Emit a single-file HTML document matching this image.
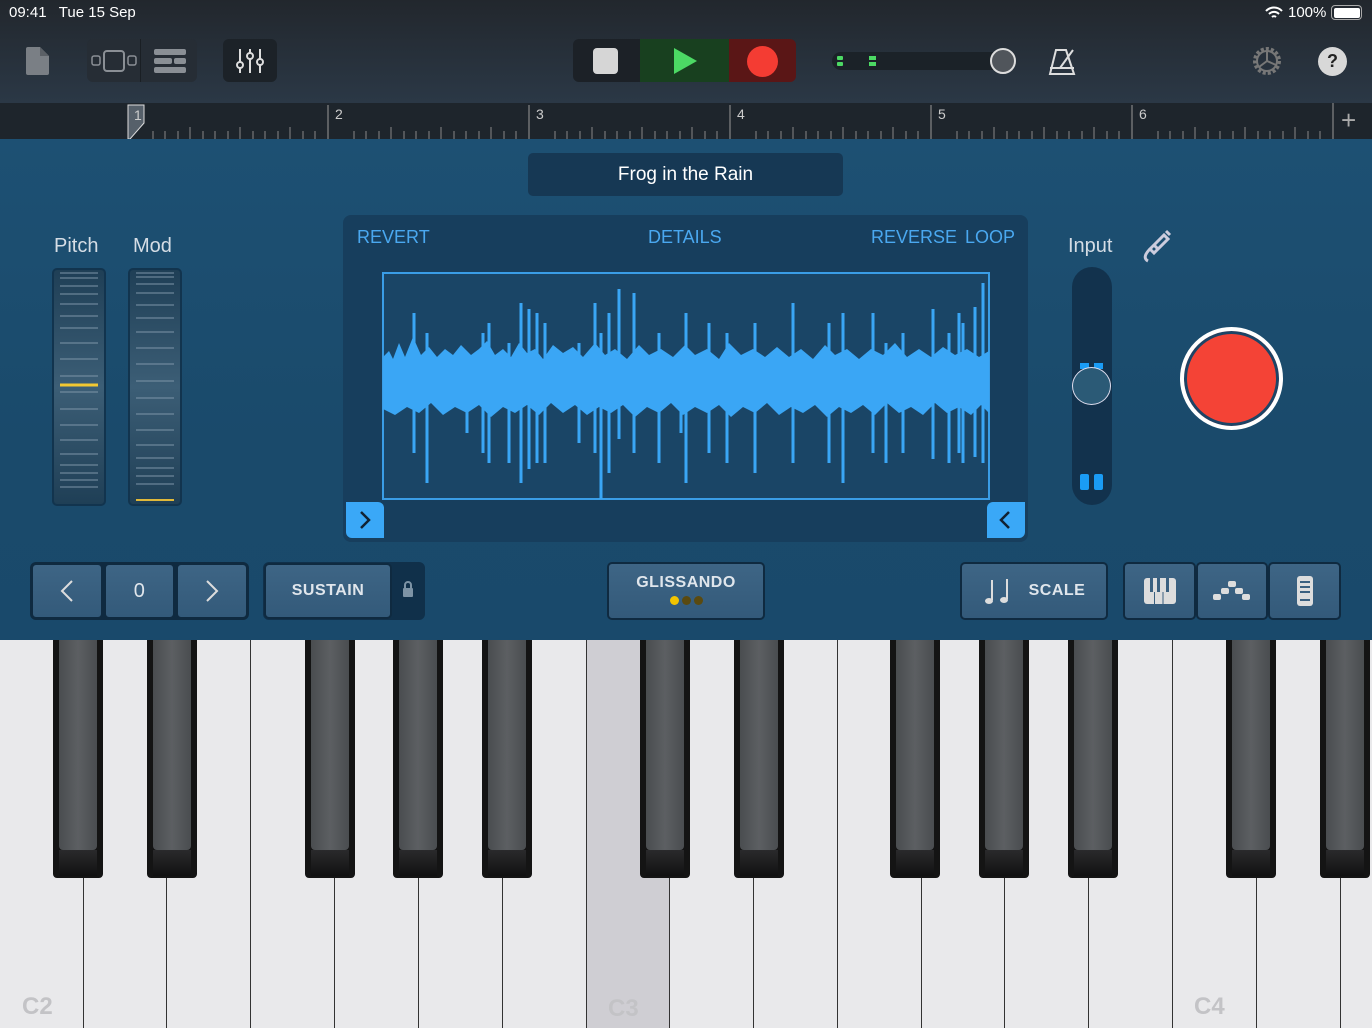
<!DOCTYPE html>
<html><head><meta charset="utf-8"><style>
*{margin:0;padding:0;box-sizing:border-box}
body{width:1372px;height:1028px;overflow:hidden;font-family:"Liberation Sans",sans-serif;background:#1b4a6c;position:relative}
.abs{position:absolute}
.top{left:0;top:0;width:1372px;height:103px;background:linear-gradient(#22272d,#2b3846)}
.ruler{left:0;top:103px;width:1372px;height:36px;background:#1e252c}
.main{left:0;top:139px;width:1372px;height:501px;background:linear-gradient(180deg,#1d5073,#1a4a6b 60%,#19496b)}
.btn{position:absolute;background:linear-gradient(#3e6585,#335a7a);border:2px solid #0f2a40;border-radius:5px;color:#e0e6ec;font-weight:bold;font-size:16px;display:flex;align-items:center;justify-content:center;letter-spacing:.5px}
.wk{position:absolute;top:640px;height:388px;background:#e9e9eb;border-right:1.5px solid #333}
.bk{position:absolute;top:640px;width:50px;height:238px;background:#141414;border-radius:0 0 4px 4px}
.bk::before{content:"";position:absolute;left:6px;right:6px;top:0;height:210px;background:linear-gradient(90deg,#4a4d50,#5c5f62,#4a4d50);border-radius:0 0 4px 4px}
.bk::after{content:"";position:absolute;left:6px;right:6px;top:210px;height:26px;background:linear-gradient(#2a2a2c,#111)}
.lbl{position:absolute;top:993px;font-size:24px;font-weight:bold;color:#c3c3c6}
</style></head><body>
<div class="abs top"></div>
<div class="abs" style="left:9px;top:4px;color:#fff;font-size:15px">09:41&nbsp;&nbsp; Tue 15 Sep</div>
<div class="abs" style="left:1288px;top:4px;color:#fff;font-size:15px">100%</div>
<svg class="abs" style="left:1264px;top:6px" width="20" height="14" viewBox="0 0 20 14"><path d="M2 5a11 11 0 0 1 16 0M5 8a7 7 0 0 1 10 0M8 11a3 3 0 0 1 4 0" stroke="#fff" stroke-width="2" fill="none"/></svg>
<div class="abs" style="left:1331px;top:5px;width:31px;height:15px;border:1.5px solid #aaa;border-radius:4px;padding:1.5px"><div style="background:#fff;width:100%;height:100%;border-radius:2px"></div></div>
<svg class="abs" style="left:25px;top:45px" width="26" height="32"><path d="M3 2h12l9 9v17a2 2 0 0 1-2 2H3a2 2 0 0 1-2-2V4a2 2 0 0 1 2-2z" fill="#7a7f85"/><path d="M15 2v9h9" fill="#5b6066"/></svg>
<div class="abs" style="left:87px;top:39px;width:110px;height:43px;background:#262d35;border-radius:6px"></div>
<div class="abs" style="left:140px;top:39px;width:1px;height:43px;background:#1a1f24"></div>
<svg class="abs" style="left:91px;top:50px" width="46" height="22"><rect x="1" y="6" width="8" height="9" rx="2" fill="none" stroke="#8a8f95" stroke-width="1.5"/><rect x="13" y="1" width="20" height="20" rx="3" fill="none" stroke="#8a8f95" stroke-width="2"/><rect x="37" y="6" width="8" height="9" rx="2" fill="none" stroke="#8a8f95" stroke-width="1.5"/></svg>
<svg class="abs" style="left:154px;top:49px" width="32" height="24"><rect x="0" y="0" width="32" height="6" rx="2" fill="#8a8f95"/><rect x="0" y="9" width="18" height="6" rx="2" fill="#8a8f95"/><rect x="20" y="9" width="12" height="6" rx="2" fill="#8a8f95"/><rect x="0" y="18" width="32" height="6" rx="2" fill="#8a8f95"/></svg>
<div class="abs" style="left:223px;top:39px;width:54px;height:43px;background:#1c2228;border-radius:6px"></div>
<svg class="abs" style="left:236px;top:47px" width="28" height="28" stroke="#ddd" stroke-width="2" fill="none"><path d="M4 2v24M14 2v24M24 2v24"/><circle cx="4" cy="18" r="3" fill="#1c2228"/><circle cx="14" cy="9" r="3" fill="#1c2228"/><circle cx="24" cy="15" r="3" fill="#1c2228"/></svg>
<div class="abs" style="left:573px;top:39px;width:67px;height:43px;background:#1c2127;border-radius:6px 0 0 6px"></div>
<div class="abs" style="left:593px;top:48px;width:25px;height:26px;background:#d6d6d6;border-radius:4px"></div>
<div class="abs" style="left:640px;top:39px;width:89px;height:43px;background:#18401f"></div>
<svg class="abs" style="left:672px;top:47px" width="26" height="28"><path d="M2 1L25 14 2 27z" fill="#4cd964"/></svg>
<div class="abs" style="left:729px;top:39px;width:67px;height:43px;background:#5a1616;border-radius:0 6px 6px 0"></div>
<div class="abs" style="left:747px;top:46px;width:31px;height:31px;background:#f43c33;border-radius:50%"></div>
<div class="abs" style="left:832px;top:52px;width:180px;height:18px;background:#1b2228;border-radius:9px"></div>
<div class="abs" style="left:837px;top:56px;width:6px;height:4px;background:#4cd964;border-radius:1px"></div><div class="abs" style="left:837px;top:62px;width:6px;height:4px;background:#4cd964;border-radius:1px"></div>
<div class="abs" style="left:869px;top:56px;width:7px;height:4px;background:#4cd964"></div><div class="abs" style="left:869px;top:62px;width:7px;height:4px;background:#4cd964"></div>
<div class="abs" style="left:990px;top:48px;width:26px;height:26px;background:#50555b;border:2px solid #ddd;border-radius:50%"></div>
<svg class="abs" style="left:1047px;top:46px" width="30" height="30" fill="none" stroke="#ddd" stroke-width="2"><path d="M9 4h10l8 24H3z"/><path d="M3 22h24M13 22L26 4"/></svg>
<svg class="abs" style="left:1251px;top:45px" width="32" height="32" fill="none" stroke="#777" stroke-width="2"><circle cx="16" cy="16" r="12" stroke-dasharray="3 2" stroke-width="4"/><circle cx="16" cy="16" r="10"/><path d="M16 16L16 6M16 16l-8 6M16 16l9 4"/></svg>
<div class="abs" style="left:1318px;top:47px;width:29px;height:29px;background:#d8d8d8;border-radius:50%;color:#222;font-weight:bold;font-size:18px;text-align:center;line-height:29px">?</div>
<div class="abs ruler"></div>
<svg class="abs" style="left:0;top:103px" width="1372" height="36">
<g stroke="#999" stroke-width="1"><path d="M328 2v34M529 2v34M730 2v34M931 2v34M1132 2v34M1333 0v36"/></g>
<path d="M128 2h16v18l-14 16h-2z" fill="#56606a" stroke="#ddd" stroke-width="1"/>
<g fill="#ccc" font-size="14" font-family="Liberation Sans"><text x="134" y="17">1</text><text x="335" y="16">2</text><text x="536" y="16">3</text><text x="737" y="16">4</text><text x="938" y="16">5</text><text x="1139" y="16">6</text></g>
<text x="1341" y="26" fill="#aaa" font-size="26" font-family="Liberation Sans">+</text>
<path stroke="#888" d="M153 28v8M165 28v8M178 28v8M190 24v12M203 28v8M215 28v8M228 28v8M240 24v12M253 28v8M265 28v8M278 28v8M290 24v12M303 28v8M315 28v8M354 28v8M366 28v8M379 28v8M391 24v12M404 28v8M416 28v8M429 28v8M441 24v12M454 28v8M466 28v8M479 28v8M491 24v12M504 28v8M516 28v8M555 28v8M567 28v8M580 28v8M592 24v12M605 28v8M617 28v8M630 28v8M642 24v12M655 28v8M667 28v8M680 28v8M692 24v12M705 28v8M717 28v8M756 28v8M768 28v8M781 28v8M793 24v12M806 28v8M818 28v8M831 28v8M843 24v12M856 28v8M868 28v8M881 28v8M893 24v12M906 28v8M918 28v8M957 28v8M969 28v8M982 28v8M994 24v12M1007 28v8M1019 28v8M1032 28v8M1044 24v12M1057 28v8M1069 28v8M1082 28v8M1094 24v12M1107 28v8M1119 28v8M1158 28v8M1170 28v8M1183 28v8M1195 24v12M1208 28v8M1220 28v8M1233 28v8M1245 24v12M1258 28v8M1270 28v8M1283 28v8M1295 24v12M1308 28v8M1320 28v8"/>
</svg>
<div class="abs main"></div>
<div class="abs" style="left:528px;top:153px;width:315px;height:43px;background:#163854;border-radius:5px;color:#fff;font-size:19px;text-align:center;line-height:43px">Frog in the Rain</div>
<div class="abs" style="left:54px;top:235px;color:#d5dde5;font-size:20px">Pitch</div>
<div class="abs" style="left:133px;top:235px;color:#d5dde5;font-size:20px">Mod</div>
<div class="abs" style="left:52px;top:268px;width:54px;height:238px;border:2px solid #12344e;border-radius:5px;background:linear-gradient(#1f3f56,#3c5e76 50%,#1f3f56)"></div>
<div class="abs" style="left:128px;top:268px;width:54px;height:238px;border:2px solid #12344e;border-radius:5px;background:linear-gradient(#1f3f56,#3c5e76 50%,#1f3f56)"></div>
<svg class="abs" style="left:52px;top:268px" width="140" height="240" stroke="#7d95a8" stroke-width="1">
<path d="M8 5h38M8 10h38M8 18h38M8 26h38M8 36h38M8 48h38M8 60h38M8 75h38M8 91h38M8 108h38M8 124h38M8 141h38M8 157h38M8 172h38M8 186h38M8 197h38M8 205h38M8 212h38M8 219h38"/>
<path d="M84 5h38M84 9h38M84 16h38M84 25h38M84 37h38M84 50h38M84 64h38M84 80h38M84 96h38M84 113h38M84 130h38M84 146h38M84 162h38M84 177h38M84 190h38M84 200h38M84 208h38M84 216h38"/>
<path d="M8 117h38" stroke="#f2c832" stroke-width="3"/><path d="M84 232h38" stroke="#e0b83a" stroke-width="2"/>
</svg>
<div class="abs" style="left:343px;top:215px;width:685px;height:327px;background:#173e5d;border-radius:8px"></div>
<div class="abs" style="left:357px;top:227px;color:#4aa8f0;font-size:18px">REVERT</div>
<div class="abs" style="left:648px;top:227px;color:#4aa8f0;font-size:18px">DETAILS</div>
<div class="abs" style="left:871px;top:227px;color:#4aa8f0;font-size:18px;word-spacing:3px">REVERSE LOOP</div>
<div class="abs" style="left:382px;top:272px;width:608px;height:228px;border:2px solid #3a9de6;background:#1a4566"></div>
<svg class="abs" style="left:383px;top:273px" width="606" height="226">
<path fill="#3aa6f5" d="M0 84L6 78 10 86 16 70 22 84 30 64 38 82 46 74 54 84 62 76 70 82 78 72 88 82 96 76 104 68 112 82 120 76 128 84 136 70 144 80 152 76 160 86 170 72 180 80 190 74 200 84 212 70 222 82 232 76 244 86 256 72 266 82 278 76 290 84 302 72 312 82 324 76 336 86 346 70 358 82 370 76 382 84 394 74 406 84 418 76 430 86 442 72 452 82 464 76 476 86 488 76 500 82 512 70 524 84 536 76 548 84 560 74 572 82 584 76 596 84 606 78 606 140 598 132 588 142 576 134 564 140 552 130 540 142 528 134 516 140 504 130 492 142 480 132 468 140 456 134 444 144 432 132 420 140 408 134 396 142 384 130 372 140 360 134 348 144 336 132 324 140 312 134 300 142 288 130 276 140 264 134 252 144 240 132 228 140 216 134 204 142 192 132 180 140 168 130 156 142 144 132 132 140 120 134 108 144 96 132 84 140 72 134 60 142 48 130 36 140 24 134 12 142 0 136z"/>
<g stroke="#3aa6f5" stroke-width="3">
<path d="M31 40v140M44 60v150M106 50v140M138 30v180M146 36v160M154 40v150M162 50v140M212 30v150M218 60v170M226 40v160M236 16v150M251 20v160M276 60v130M303 40v170M326 50v130M344 60v130M372 50v150M410 30v160M446 50v140M460 40v170M490 40v140M503 70v120M550 36v150M566 60v130M580 50v140M592 34v150M600 10v180M576 40v140M520 60v120M126 70v120M84 80v80M100 60v120M196 70v100M298 80v80"/>
</g>
</svg>
<div class="abs" style="left:346px;top:502px;width:38px;height:36px;background:#3aa8f7;border-radius:0 6px 0 6px"></div>
<svg class="abs" style="left:358px;top:510px" width="14" height="20"><path d="M3 2l8 8-8 8" stroke="#123" stroke-width="2.5" fill="none"/></svg>
<div class="abs" style="left:987px;top:502px;width:38px;height:36px;background:#3aa8f7;border-radius:6px 0 6px 0"></div>
<svg class="abs" style="left:998px;top:510px" width="14" height="20"><path d="M11 2l-8 8 8 8" stroke="#123" stroke-width="2.5" fill="none"/></svg>
<div class="abs" style="left:1068px;top:235px;color:#d5dde5;font-size:20px">Input</div>
<svg class="abs" style="left:1140px;top:227px" width="34" height="38" fill="none" stroke="#ccd" stroke-width="3"><path d="M26 4l4 4M14 18l10-10 4 4-10 10zM14 18l-4 4 4 4 4-4M10 22c-6 6-6 10-2 12"/></svg>
<div class="abs" style="left:1072px;top:267px;width:40px;height:238px;background:#12324d;border-radius:20px"></div>
<div class="abs" style="left:1080px;top:474px;width:9px;height:16px;background:#1a9cf5;border-radius:2px"></div>
<div class="abs" style="left:1094px;top:474px;width:9px;height:16px;background:#1a9cf5;border-radius:2px"></div>
<div class="abs" style="left:1080px;top:363px;width:9px;height:6px;background:#1a9cf5"></div>
<div class="abs" style="left:1094px;top:363px;width:9px;height:6px;background:#1a9cf5"></div>
<div class="abs" style="left:1072px;top:367px;width:39px;height:38px;background:#2b5a76;border:1.5px solid #dde;border-radius:50%"></div>
<div class="abs" style="left:1180px;top:327px;width:103px;height:103px;border:4px solid #fff;border-radius:50%;background:#f44336;box-shadow:inset 0 0 0 3px #1c4466"></div>
<div class="abs" style="left:30px;top:562px;width:219px;height:58px;background:#0f2a40;border-radius:6px"></div>
<div class="btn" style="left:31px;top:563px;width:72px;height:56px"><svg width="14" height="24"><path d="M12 2L2 12l10 10" stroke="#ddd" stroke-width="2" fill="none"/></svg></div>
<div class="btn" style="left:104px;top:563px;width:71px;height:56px;font-weight:normal;font-size:20px">0</div>
<div class="btn" style="left:176px;top:563px;width:72px;height:56px"><svg width="14" height="24"><path d="M2 2l10 10L2 22" stroke="#ddd" stroke-width="2" fill="none"/></svg></div>
<div class="abs" style="left:263px;top:562px;width:162px;height:58px;background:#10304a;border-radius:6px"></div>
<div class="btn" style="left:264px;top:563px;width:128px;height:56px">SUSTAIN</div>
<svg class="abs" style="left:402px;top:580px" width="12" height="18"><path d="M3 8V5a3 3 0 0 1 6 0v3" stroke="#7d93a5" stroke-width="2" fill="none"/><rect x="1" y="8" width="10" height="9" rx="1" fill="#7d93a5"/></svg>
<div class="btn" style="left:607px;top:562px;width:158px;height:58px;flex-direction:column;padding-bottom:4px">GLISSANDO<div style="display:flex;gap:3px;margin-top:4px"><span style="width:9px;height:9px;border-radius:50%;background:#f2c400"></span><span style="width:9px;height:9px;border-radius:50%;background:#5a4a10"></span><span style="width:9px;height:9px;border-radius:50%;background:#5a4a10"></span></div></div>
<div class="btn" style="left:960px;top:562px;width:148px;height:58px"><svg width="30" height="30" style="margin-right:16px" fill="#ddd" stroke="#ddd" stroke-width="2"><ellipse cx="6" cy="25" rx="4" ry="3" stroke="none"/><ellipse cx="21" cy="24" rx="4" ry="3" stroke="none"/><path d="M9 24V4M24 23V3"/></svg>SCALE</div>
<div class="btn" style="left:1123px;top:562px;width:73px;height:58px"><svg width="32" height="26"><rect x="0" y="0" width="32" height="26" rx="3" fill="#ddd"/><g fill="#3a6080"><rect x="6" y="0" width="3" height="14"/><rect x="13" y="0" width="3" height="14"/><rect x="22" y="0" width="3" height="14"/><path d="M10.5 14v12M19 14v12" stroke="#3a6080"/></g></svg></div>
<div class="btn" style="left:1196px;top:562px;width:72px;height:58px"><svg width="38" height="22" fill="#ddd"><rect x="0" y="14" width="8" height="6" rx="2"/><rect x="8" y="8" width="8" height="6" rx="2"/><rect x="15" y="1" width="8" height="6" rx="2"/><rect x="22" y="8" width="8" height="6" rx="2"/><rect x="29" y="14" width="8" height="6" rx="2"/></svg></div>
<div class="btn" style="left:1268px;top:562px;width:73px;height:58px"><svg width="16" height="30"><rect x="0" y="0" width="16" height="30" rx="3" fill="#ddd"/><path d="M3 6h10M3 11h10M3 16h10M3 24h10" stroke="#3a6080" stroke-width="2"/></svg></div>
<div class="wk" style="left:0;width:84px"></div>
<div class="wk" style="left:84px;width:83px"></div>
<div class="wk" style="left:167px;width:84px"></div>
<div class="wk" style="left:251px;width:84px"></div>
<div class="wk" style="left:335px;width:84px"></div>
<div class="wk" style="left:419px;width:84px"></div>
<div class="wk" style="left:503px;width:84px"></div>
<div class="wk" style="left:587px;width:83px;background:#cfced3"></div>
<div class="wk" style="left:670px;width:84px"></div>
<div class="wk" style="left:754px;width:84px"></div>
<div class="wk" style="left:838px;width:84px"></div>
<div class="wk" style="left:922px;width:83px"></div>
<div class="wk" style="left:1005px;width:84px"></div>
<div class="wk" style="left:1089px;width:84px"></div>
<div class="wk" style="left:1173px;width:84px"></div>
<div class="wk" style="left:1257px;width:84px"></div>
<div class="wk" style="left:1341px;width:40px"></div>
<div class="bk" style="left:53px"></div><div class="bk" style="left:147px"></div>
<div class="bk" style="left:305px"></div><div class="bk" style="left:393px"></div><div class="bk" style="left:482px"></div>
<div class="bk" style="left:640px"></div><div class="bk" style="left:734px"></div>
<div class="bk" style="left:890px"></div><div class="bk" style="left:979px"></div><div class="bk" style="left:1068px"></div>
<div class="bk" style="left:1226px"></div><div class="bk" style="left:1320px"></div>
<div class="lbl" style="left:22px">C2</div>
<div class="lbl" style="left:608px;top:995px">C3</div>
<div class="lbl" style="left:1194px">C4</div>
</body></html>
